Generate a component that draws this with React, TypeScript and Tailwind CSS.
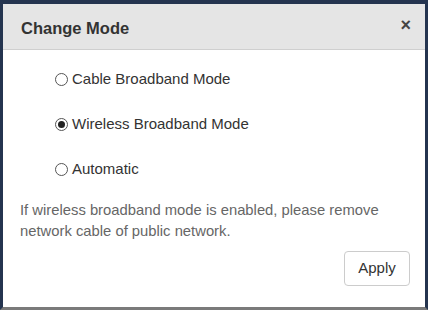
import React, { useState } from 'react';

const modes = [
  { id: 'cable', label: 'Cable Broadband Mode' },
  { id: 'wireless', label: 'Wireless Broadband Mode' },
  { id: 'auto', label: 'Automatic' },
];

export default function App() {
  const [mode, setMode] = useState('wireless');

  return (
    <div className="w-[429px] h-[312px] bg-white" style={{ fontFamily: '"Liberation Sans", Arial, sans-serif' }}>
      <div className="w-[428px] h-[310px] bg-white flex flex-col border-l-[3px] border-t-[4px] border-r-[3px] border-b-[3px] border-l-[#24344f] border-t-[#24344f] border-r-[#24344f] border-b-[#7a7a7a]">
        <div className="h-[46px] bg-[#e5e5e5] border-b border-[#cfcfcf] flex items-center justify-between pl-[18px] pr-[14px] pt-[4px]">
          <h2 className="text-[16.5px] font-bold text-[#333]">Change Mode</h2>
          <button className="text-[18px] font-bold text-[#444] leading-none -mt-[8px]">×</button>
        </div>

        <div className="flex flex-col pl-[52px] pt-[19px] gap-[24px]">
          {modes.map((m) => (
            <label key={m.id} className="flex items-center gap-[4px] h-[21px] text-[15px] text-[#333] cursor-pointer">
              <span className="w-[13px] h-[13px] rounded-full border border-[#555] flex items-center justify-center bg-white">
                {mode === m.id && <span className="w-[7px] h-[7px] rounded-full bg-[#222]" />}
              </span>
              <input type="radio" className="hidden" checked={mode === m.id} onChange={() => setMode(m.id)} />
              {m.label}
            </label>
          ))}
        </div>

        <p className="pl-[17px] pr-[14px] mt-[20px] text-[14.8px] leading-[21px] text-[#666]">
          If wireless broadband mode is enabled, please remove network cable of public network.
        </p>

        <div className="flex justify-end pr-[15px] mt-[9px]">
          <button className="w-[66px] h-[35px] rounded-[4px] border border-[#ccc] bg-white text-[15px] text-[#333]">
            Apply
          </button>
        </div>
      </div>
    </div>
  );
}
